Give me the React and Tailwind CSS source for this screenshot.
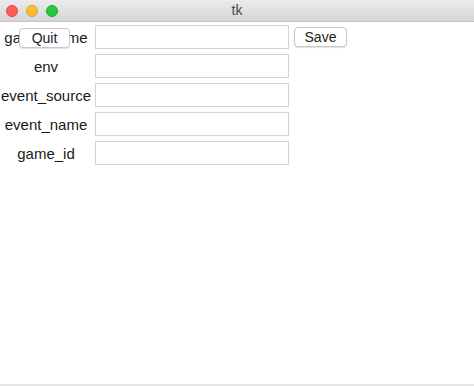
import React from 'react';

const fields = ['game_name', 'env', 'event_source', 'event_name', 'game_id'];

const TitleBar = () => (
  <div className="relative flex h-[22px] items-center border-b border-[#c4c4c4] bg-gradient-to-b from-[#ececec] to-[#d6d6d6]">
    <div className="flex items-center gap-[8px] pl-[6px]">
      <span className="h-[12px] w-[12px] rounded-full border border-[#e0443e] bg-[#fe5f57]"></span>
      <span className="h-[12px] w-[12px] rounded-full border border-[#dea123] bg-[#febc2e]"></span>
      <span className="h-[12px] w-[12px] rounded-full border border-[#1aab29] bg-[#28c840]"></span>
    </div>
    <div className="absolute inset-0 flex items-center justify-center text-[14px] text-[#4a4a4a]">tk</div>
  </div>
);

const TkButton = ({ children, className = '' }) => (
  <button className={`flex h-[20px] items-center justify-center rounded-[4px] border border-[#c8c8c8] bg-white text-[14px] text-[#222] shadow-[0_1px_1px_rgba(0,0,0,0.12)] ${className}`}>
    {children}
  </button>
);

export default function App() {
  return (
    <div className="relative flex h-[386px] w-[474px] flex-col overflow-hidden bg-white" style={{ fontFamily: '"Liberation Sans", Arial, sans-serif' }}>
      <TitleBar />
      <div className="relative flex-1 border-b-[2px] border-[#e6e6e6]">
        <div className="grid grid-cols-[92px_194px_55px] gap-x-[3px] gap-y-[5px] pt-[3px]">
          {fields.map((name, i) => (
            <React.Fragment key={name}>
              <div className="flex h-[24px] items-center justify-center overflow-visible whitespace-nowrap pt-[2px] text-[15px] text-[#1a1a1a]">
                {name}
              </div>
              <div className="h-[24px] border border-[#d4d4d4] bg-white"></div>
              {i === 0 ? (
                <div className="flex items-center pl-[2px]">
                  <TkButton className="w-[55px]">Save</TkButton>
                </div>
              ) : (
                <div></div>
              )}
            </React.Fragment>
          ))}
        </div>
        <div className="absolute left-[19px] top-[6px]">
          <TkButton className="w-[51px]">Quit</TkButton>
        </div>
      </div>
    </div>
  );
}
